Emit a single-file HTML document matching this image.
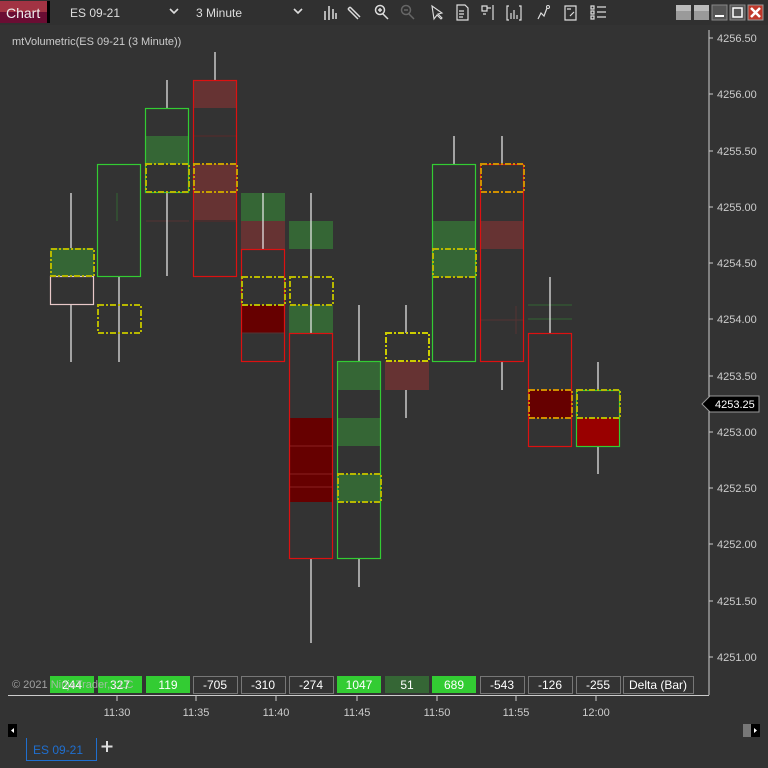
<!DOCTYPE html>
<html><head><meta charset="utf-8"><style>
html,body{margin:0;padding:0;background:#333;width:768px;height:768px;overflow:hidden}
svg{display:block}
text{font-family:"Liberation Sans",sans-serif}
</style></head><body>
<svg width="768" height="768" viewBox="0 0 768 768" xmlns="http://www.w3.org/2000/svg">
<rect width="768" height="768" fill="#333"/>
<!-- toolbar -->
<rect x="0" y="0" width="768" height="25" fill="#303030"/>
<rect x="0" y="1" width="47" height="11" fill="#a23343"/>
<rect x="0" y="12" width="47" height="11" fill="#6a0d33"/>
<rect x="47" y="1" width="3" height="22" fill="#000"/>
<text x="6" y="18" font-size="14" fill="#eee">Chart</text>
<text x="70" y="17" font-size="12" fill="#ddd">ES 09-21</text>
<path d="M170 9l4 4 4-4" stroke="#ddd" stroke-width="1.6" fill="none"/>
<text x="196" y="17" font-size="12" fill="#ddd">3 Minute</text>
<path d="M294 9l4 4 4-4" stroke="#ddd" stroke-width="1.6" fill="none"/>
<g stroke="#ddd" stroke-width="1.5" fill="none">
<path d="M325 11v9M329 6v14M333 9v10M336 13v6"/>
<path d="M350 7l10 10M348 9l10 10M348 9l2-2"/>
<circle cx="380" cy="10" r="4.5"/><path d="M383 14l5 5M378 10h4M380 8v4"/>
<g stroke="#666"><circle cx="406" cy="10" r="4.5"/><path d="M409 14l5 5M404 10h4"/></g>
<path d="M432 6l2 13 3-4 4 4 1-1-4-4 4-1z" stroke-width="1.1"/>
<path d="M457 5h8l3 3v12h-11zM459 11h5M459 14h5M459 17h4" stroke-width="1.2"/>
<path d="M482 6h5v5h-5zM487 8h4M493 5v15M483 14h3" stroke-width="1.2"/>
<path d="M509 6h-2v14h2M519 6h2v14h-2M511 19v-6M514 19v-9M517 19v-4" stroke-width="1.2"/>
<path d="M538 19l3-6 3 3 3-8" stroke-width="1.2"/><circle cx="548" cy="7" r="1.5" stroke-width="1"/>
<path d="M565 6h11v14h-11zM567 9h4M570 16l4-4" stroke-width="1.2"/>
<path d="M591 6h3v3h-3zM591 11h3v3h-3zM591 16h3v3h-3zM597 7h9M597 12h9M597 17h9" stroke-width="1.2"/>
</g>
<!-- window buttons -->
<rect x="676" y="5" width="15" height="15" fill="#9a9a9a"/><rect x="676" y="5" width="15" height="6" fill="#bbb"/>
<rect x="694" y="5" width="15" height="15" fill="#9a9a9a"/><rect x="694" y="5" width="15" height="6" fill="#bbb"/>
<rect x="712" y="5" width="15" height="15" fill="#555" stroke="#888"/><path d="M715 16h9" stroke="#fff" stroke-width="2"/>
<rect x="730" y="5" width="15" height="15" fill="#555" stroke="#888"/><rect x="733" y="8" width="9" height="9" fill="none" stroke="#fff" stroke-width="1.5"/>
<rect x="748" y="5" width="15" height="15" fill="#c0392b" stroke="#999"/><path d="M751 8l9 9M760 8l-9 9" stroke="#fff" stroke-width="2.5"/>
<text x="12" y="45" font-size="11" fill="#ccc">mtVolumetric(ES 09-21 (3 Minute))</text>
<!-- right axis -->
<path d="M709 30V695" stroke="#ccc" stroke-width="1"/>
<g font-size="11" fill="#ccc" stroke="none">
<text x="717" y="42">4256.50</text><text x="717" y="98">4256.00</text><text x="717" y="155">4255.50</text>
<text x="717" y="211">4255.00</text><text x="717" y="267">4254.50</text><text x="717" y="323">4254.00</text>
<text x="717" y="380">4253.50</text><text x="717" y="436">4253.00</text><text x="717" y="492">4252.50</text>
<text x="717" y="548">4252.00</text><text x="717" y="605">4251.50</text><text x="717" y="661">4251.00</text>
</g>
<g stroke="#ccc"><path d="M709 38h4M709 94h4M709 151h4M709 207h4M709 263h4M709 319h4M709 376h4M709 432h4M709 488h4M709 544h4M709 601h4M709 657h4"/></g>
<!-- fills -->
<g>
<rect x="50" y="248" width="44" height="28" fill="#356635"/>
<rect x="145" y="136" width="44" height="28" fill="#356635"/>
<rect x="193" y="80" width="44" height="28" fill="#663333"/>
<rect x="193" y="164" width="44" height="56" fill="#663333"/>
<rect x="241" y="193" width="44" height="28" fill="#356635"/>
<rect x="241" y="221" width="44" height="28" fill="#663333"/>
<rect x="241" y="305" width="44" height="28" fill="#660000"/>
<rect x="289" y="221" width="44" height="28" fill="#356635"/>
<rect x="289" y="305" width="44" height="28" fill="#356635"/>
<rect x="289" y="418" width="44" height="84" fill="#660000"/>
<rect x="337" y="361" width="44" height="29" fill="#356635"/>
<rect x="337" y="418" width="44" height="28" fill="#356635"/>
<rect x="337" y="474" width="44" height="28" fill="#356635"/>
<rect x="385" y="361" width="44" height="29" fill="#663333"/>
<rect x="432" y="221" width="44" height="56" fill="#356635"/>
<rect x="480" y="221" width="44" height="28" fill="#663333"/>
<rect x="528" y="390" width="44" height="28" fill="#660000"/>
<rect x="576" y="418" width="44" height="28" fill="#990000"/>
</g>
<!-- faint lines -->
<g stroke-width="1">
<path d="M117 193v28" stroke="#336633"/>
<path d="M146 221h43" stroke="#553333"/>
<path d="M193 136h44M193 221h44" stroke="#5a2a2a"/>
<path d="M289 446h44M289 474h44M289 487h44" stroke="#8a2020"/>
<path d="M481 320h43M516 306v28" stroke="#553333"/>
<path d="M528 305h44M528 319h44" stroke="#336633"/>
<path d="M241 333h44" stroke="#553333"/>
</g>
<!-- wicks -->
<g stroke="#eee" stroke-width="1.2">
<path d="M71 193v55M71 304v58"/>
<path d="M119 276v86"/>
<path d="M167 80v28M167 192v84"/>
<path d="M215 52v28"/>
<path d="M263 193v56"/>
<path d="M311 193v140M311 558v85"/>
<path d="M359 305v56M359 558v29"/>
<path d="M406 305v28M406 390v28"/>
<path d="M454 136v28"/>
<path d="M502 136v28M502 361v29"/>
<path d="M550 277v56"/>
<path d="M598 362v28M598 446v28"/>
</g>
<!-- outlines -->
<g fill="none" stroke-width="1.2">
<rect x="50.5" y="276.5" width="43" height="28" stroke="#e8c8c8"/>
<rect x="97.5" y="164.5" width="43" height="112" stroke="#33cc33"/>
<rect x="145.5" y="108.5" width="43" height="84" stroke="#33cc33"/>
<rect x="193.5" y="80.5" width="43" height="196" stroke="#dd1111"/>
<rect x="241.5" y="249.5" width="43" height="112" stroke="#dd1111"/>
<rect x="289.5" y="333.5" width="43" height="225" stroke="#dd1111"/>
<rect x="337.5" y="361.5" width="43" height="197" stroke="#33cc33"/>
<rect x="432.5" y="164.5" width="43" height="197" stroke="#33cc33"/>
<rect x="480.5" y="164.5" width="43" height="197" stroke="#dd1111"/>
<rect x="528.5" y="333.5" width="43" height="113" stroke="#dd1111"/>
<rect x="576.5" y="390.5" width="43" height="56" stroke="#33cc33"/>
</g>
<!-- yellow dashed POC boxes -->
<g fill="none" stroke="#b8b800" stroke-width="2" stroke-dasharray="6 2 2 2">
<rect x="51" y="249" width="43" height="27"/>
<rect x="98" y="305" width="43" height="28"/>
<rect x="146" y="164" width="43" height="28"/>
<rect x="194" y="164" width="43" height="28" stroke="#c8a000"/>
<rect x="242" y="277" width="43" height="28"/>
<rect x="290" y="277" width="43" height="28"/>
<rect x="338" y="474" width="43" height="28"/>
<rect x="386" y="333" width="43" height="28" stroke="#cccc00"/>
<rect x="433" y="249" width="43" height="28"/>
<rect x="481" y="164" width="43" height="28" stroke="#d09000"/>
<rect x="529" y="390" width="43" height="28" stroke="#d09000"/>
<rect x="577" y="390" width="43" height="28"/>
</g>
<!-- price tag -->
<path d="M702 404l8-8h49v16h-49z" fill="#000" stroke="#999"/>
<text x="715" y="408" font-size="11" fill="#fff">4253.25</text>
<!-- delta row -->
<g font-size="12" text-anchor="middle">
<rect x="50" y="676" width="44" height="17" fill="#33cc33"/><text x="72" y="689" fill="#fff">244</text>
<rect x="98" y="676" width="44" height="17" fill="#33cc33"/><text x="120" y="689" fill="#fff">327</text>
<rect x="146" y="676" width="44" height="17" fill="#33cc33"/><text x="168" y="689" fill="#fff">119</text>
<rect x="193.5" y="676.5" width="44" height="17" fill="none" stroke="#777"/><text x="215" y="689" fill="#fff">-705</text>
<rect x="241.5" y="676.5" width="44" height="17" fill="none" stroke="#777"/><text x="263" y="689" fill="#fff">-310</text>
<rect x="289.5" y="676.5" width="44" height="17" fill="none" stroke="#777"/><text x="311" y="689" fill="#fff">-274</text>
<rect x="337" y="676" width="44" height="17" fill="#33cc33"/><text x="359" y="689" fill="#fff">1047</text>
<rect x="385" y="676" width="44" height="17" fill="#356635"/><text x="407" y="689" fill="#fff">51</text>
<rect x="432" y="676" width="44" height="17" fill="#33cc33"/><text x="454" y="689" fill="#fff">689</text>
<rect x="480.5" y="676.5" width="44" height="17" fill="none" stroke="#777"/><text x="502" y="689" fill="#fff">-543</text>
<rect x="528.5" y="676.5" width="44" height="17" fill="none" stroke="#777"/><text x="550" y="689" fill="#fff">-126</text>
<rect x="576.5" y="676.5" width="44" height="17" fill="none" stroke="#777"/><text x="598" y="689" fill="#fff">-255</text>
<rect x="623.5" y="676.5" width="70" height="17" fill="none" stroke="#777"/><text x="658" y="689" fill="#fff">Delta (Bar)</text>
</g>
<text x="12" y="688" font-size="11" fill="#bbb" fill-opacity="0.8">© 2021 NinjaTrader, LLC</text>
<!-- time axis -->
<path d="M8 695.5H709" stroke="#ccc"/>
<path d="M117 695v6M196 695v6M276 695v6M357 695v6M437 695v6M516 695v6M596 695v6" stroke="#ccc"/>
<g font-size="11" fill="#ccc" text-anchor="middle">
<text x="117" y="716">11:30</text><text x="196" y="716">11:35</text><text x="276" y="716">11:40</text>
<text x="357" y="716">11:45</text><text x="437" y="716">11:50</text><text x="516" y="716">11:55</text><text x="596" y="716">12:00</text>
</g>
<!-- scrollbar -->
<rect x="8" y="724" width="9" height="13" fill="#000"/><path d="M14 728l-3 2.5 3 2.5z" fill="#fff"/>
<rect x="743" y="724" width="8" height="13" fill="#777"/>
<rect x="751" y="724" width="9" height="13" fill="#000"/><path d="M754 728l3 2.5-3 2.5z" fill="#fff"/>
<!-- tab -->
<path d="M26.5 738v22.5h70V738" fill="none" stroke="#1f6fd0"/>
<text x="33" y="754" font-size="12" fill="#1f6fd0">ES 09-21</text>
<path d="M107 741v11M101.5 746.5h11" stroke="#ddd" stroke-width="2"/>
</svg>
</body></html>
